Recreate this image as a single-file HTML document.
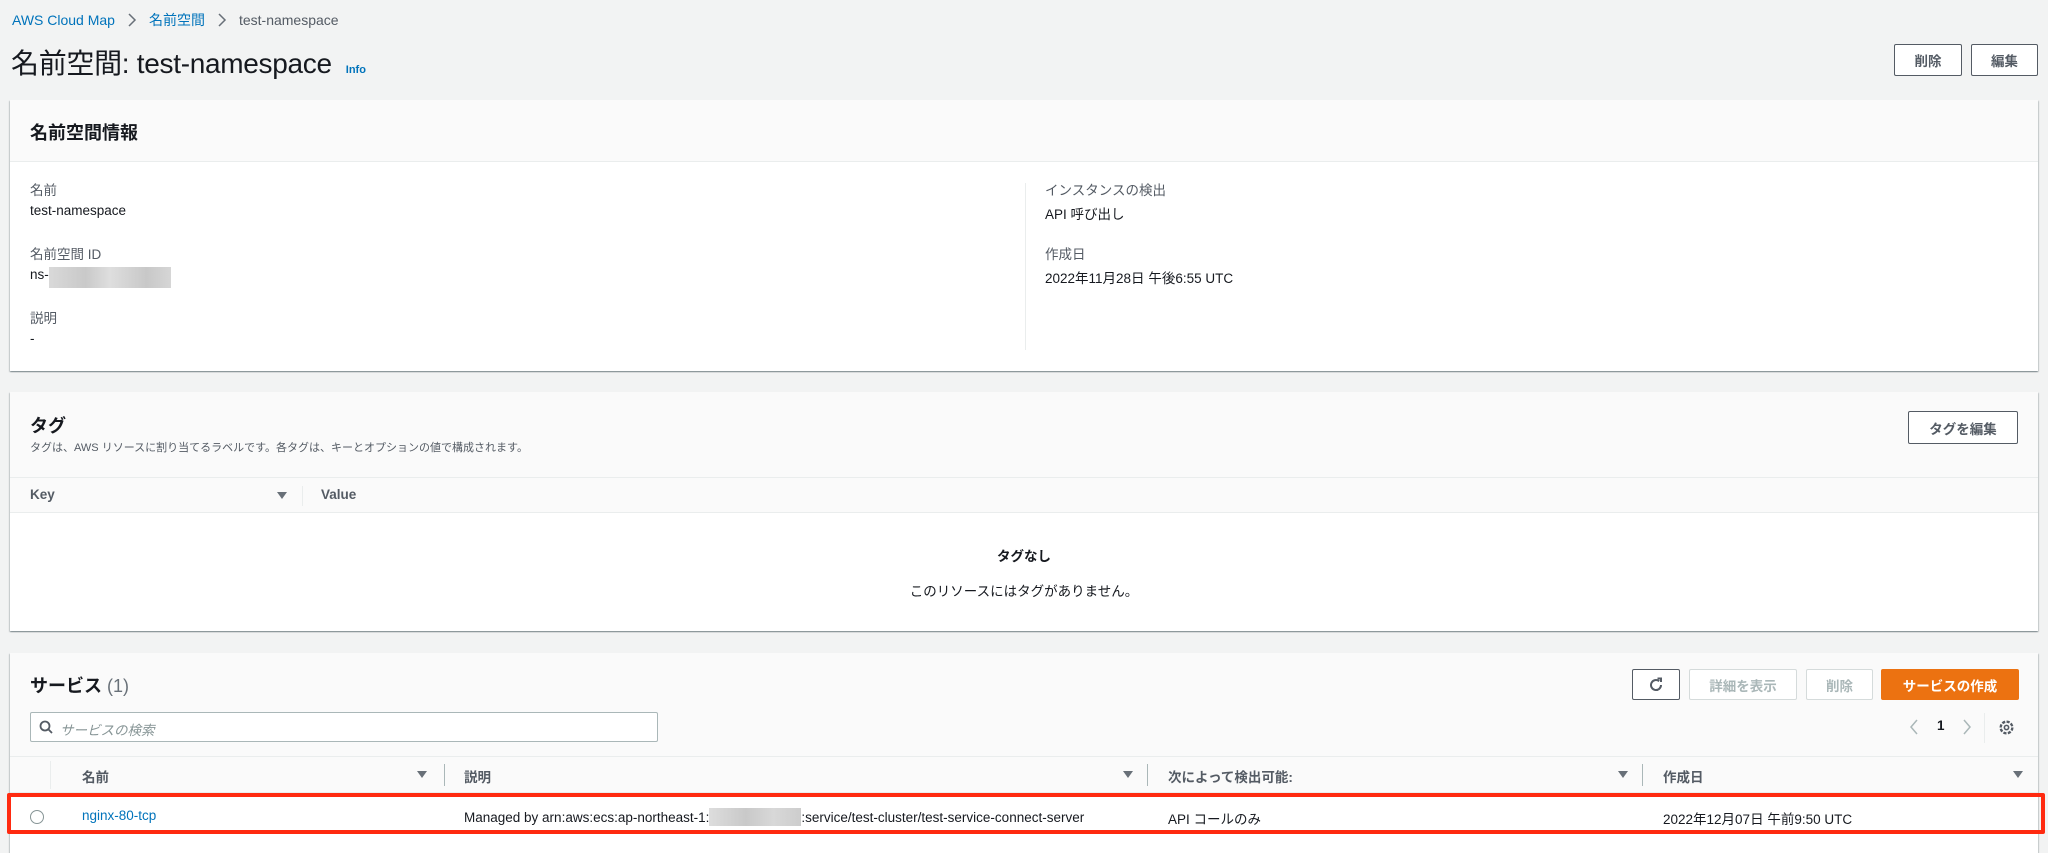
<!DOCTYPE html>
<html><head><meta charset="utf-8"><style>
*{box-sizing:border-box;margin:0;padding:0}
body{width:2048px;height:843px;background:#f2f3f3;font-family:"Liberation Sans","Noto Sans CJK JP",sans-serif;color:#16191f;position:relative;overflow:hidden;font-size:13.5px}
.a{position:absolute;white-space:nowrap}
.card{position:absolute;left:10px;width:2028px;background:#fff;box-shadow:0 1px 1px 0 rgba(0,28,36,.3),1px 1px 1px 0 rgba(0,28,36,.15),-1px 1px 1px 0 rgba(0,28,36,.15)}
.hd{background:#fafafa;border-bottom:1px solid #eaeded}
.lbl{color:#545b64}
.btn{position:absolute;border:1px solid #545b64;border-radius:2px;background:#fff;font-weight:bold;font-size:13.5px;color:#545b64;display:flex;align-items:center;justify-content:center}
.dis{border-color:#d5dbdb;color:#aab7b8}
.th{font-weight:bold;color:#545b64}
.tri{position:absolute;width:0;height:0;border-left:5px solid transparent;border-right:5px solid transparent;border-top:7px solid #687078}
.vd{position:absolute;width:1px;background:#aab7b8}
.blur{position:absolute;background:linear-gradient(90deg,#d9d9d9,#c9c9c9 30%,#dedede 50%,#c8c8c8 80%,#d6d6d6)}
.bc{position:absolute;left:12px;top:10px;font-size:14px;display:flex;align-items:center;gap:12px;white-space:nowrap}
</style></head><body>
<div class="bc"><span style="color:#0073bb">AWS Cloud Map</span>
<svg width="10" height="16" viewBox="0 0 10 16"><path d="M2 2l6 6-6 6" fill="none" stroke="#687078" stroke-width="1.5"/></svg>
<span style="color:#0073bb">名前空間</span>
<svg width="10" height="16" viewBox="0 0 10 16"><path d="M2 2l6 6-6 6" fill="none" stroke="#687078" stroke-width="1.5"/></svg>
<span style="color:#545b64">test-namespace</span></div>
<div class="a" style="left:11px;top:42px;font-size:28px;letter-spacing:-0.3px">名前空間: test-namespace<span style="font-size:11px;font-weight:bold;color:#0073bb;margin-left:14px;letter-spacing:0">Info</span></div>
<div class="btn" style="left:1894px;top:44px;width:68px;height:32px">削除</div>
<div class="btn" style="left:1971px;top:44px;width:67px;height:32px">編集</div>

<div class="card" style="top:100px;height:271px">
 <div class="hd" style="height:62px"></div>
 <div class="a" style="left:20px;top:19px;font-size:18px;font-weight:bold">名前空間情報</div>
 <div class="a lbl" style="left:20px;top:79px">名前</div>
 <div class="a" style="left:20px;top:103px">test-namespace</div>
 <div class="a lbl" style="left:20px;top:143px">名前空間 ID</div>
 <div class="a" style="left:20px;top:167px">ns-</div>
 <div class="blur" style="left:39px;top:167px;width:122px;height:21px"></div>
 <div class="a lbl" style="left:20px;top:207px">説明</div>
 <div class="a" style="left:20px;top:231px">-</div>
 <div class="vd" style="left:1015px;top:83px;height:167px;background:#eaeded"></div>
 <div class="a lbl" style="left:1035px;top:79px">インスタンスの検出</div>
 <div class="a" style="left:1035px;top:103px">API 呼び出し</div>
 <div class="a lbl" style="left:1035px;top:143px">作成日</div>
 <div class="a" style="left:1035px;top:167px">2022年11月28日 午後6:55 UTC</div>
</div>

<div class="card" style="top:392px;height:239px">
 <div class="hd" style="height:86px;border-bottom:1px solid #eaeded"></div>
 <div class="a" style="left:20px;top:20px;font-size:18px;font-weight:bold">タグ</div>
 <div class="a lbl" style="left:20px;top:47px;font-size:11px">タグは、AWS リソースに割り当てるラベルです。各タグは、キーとオプションの値で構成されます。</div>
 <div class="btn" style="left:1898px;top:19px;width:110px;height:33px">タグを編集</div>
 <div style="position:absolute;left:0;top:86px;width:100%;height:35px;background:#fafafa;border-bottom:1px solid #eaeded"></div>
 <div class="a th" style="left:20px;top:95px">Key</div>
 <div class="tri" style="left:267px;top:100px"></div>
 <div class="vd" style="left:292px;top:94px;height:20px;background:#eaeded"></div>
 <div class="a th" style="left:311px;top:95px">Value</div>
 <div class="a" style="left:0;width:100%;text-align:center;top:153px;font-weight:bold">タグなし</div>
 <div class="a" style="left:0;width:100%;text-align:center;top:188px">このリソースにはタグがありません。</div>
</div>

<div class="card" style="top:653px;height:200px">
 <div class="hd" style="height:104px;border-bottom:1px solid #eaeded"></div>
 <div class="a" style="left:20px;top:19px;font-size:18px;font-weight:bold">サービス <span style="font-weight:normal;color:#687078">(1)</span></div>
 <div class="btn" style="left:1622px;top:16px;width:48px;height:31px;color:#545b64">
  <svg width="16" height="16" viewBox="0 0 16 16"><path d="M13 8a5 5 0 1 1-1.8-3.8" fill="none" stroke="#545b64" stroke-width="2"/><path d="M9.5 1.5h3.5v3.5" fill="none" stroke="#545b64" stroke-width="2"/></svg></div>
 <div class="btn dis" style="left:1679px;top:16px;width:108px;height:31px">詳細を表示</div>
 <div class="btn dis" style="left:1796px;top:16px;width:67px;height:31px">削除</div>
 <div class="btn" style="left:1871px;top:16px;width:138px;height:31px;background:#ec7211;border-color:#ec7211;color:#fff">サービスの作成</div>
 <div style="position:absolute;left:20px;top:59px;width:628px;height:30px;border:1px solid #aab7b8;border-radius:2px;background:#fff"></div>
 <svg class="a" style="left:29px;top:67px" width="14" height="14" viewBox="0 0 14 14"><circle cx="6" cy="6" r="4.5" fill="none" stroke="#545b64" stroke-width="1.8"/><path d="M9.3 9.3 13 13" stroke="#545b64" stroke-width="1.8"/></svg>
 <div class="a" style="left:50px;top:66px;color:#879596;font-style:italic">サービスの検索</div>
 <svg class="a" style="left:1899px;top:65px" width="10" height="18" viewBox="0 0 10 18"><path d="M8 2 2 9l6 7" fill="none" stroke="#aab7b8" stroke-width="1.5"/></svg>
 <div class="a" style="left:1927px;top:65px;font-weight:bold">1</div>
 <svg class="a" style="left:1952px;top:65px" width="10" height="18" viewBox="0 0 10 18"><path d="M2 2l6 7-6 7" fill="none" stroke="#aab7b8" stroke-width="1.5"/></svg>
 <div class="vd" style="left:1974px;top:60px;height:30px;background:#eaeded"></div>
 <svg class="a" style="left:1988px;top:66px" width="17" height="17" viewBox="0 0 16 16"><circle cx="8" cy="8" r="5.5" fill="none" stroke="#545b64" stroke-width="2.2" stroke-dasharray="3 1.3"/><circle cx="8" cy="8" r="2" fill="none" stroke="#545b64" stroke-width="1.5"/></svg>
 <div style="position:absolute;left:0;top:104px;width:100%;height:36px;background:#fafafa;border-bottom:1px solid #eaeded"></div>
 <div class="vd" style="left:40px;top:108px;height:28px;background:#eaeded"></div>
 <div class="a th" style="left:72px;top:113px">名前</div>
 <div class="tri" style="left:407px;top:118px"></div>
 <div class="vd" style="left:434px;top:111px;height:22px"></div>
 <div class="a th" style="left:454px;top:113px">説明</div>
 <div class="tri" style="left:1113px;top:118px"></div>
 <div class="vd" style="left:1137px;top:111px;height:22px"></div>
 <div class="a th" style="left:1158px;top:113px">次によって検出可能:</div>
 <div class="tri" style="left:1608px;top:118px"></div>
 <div class="vd" style="left:1632px;top:111px;height:22px"></div>
 <div class="a th" style="left:1653px;top:113px">作成日</div>
 <div class="tri" style="left:2003px;top:118px"></div>
 <div style="position:absolute;left:20px;top:157px;width:14px;height:14px;border:1.5px solid #879596;border-radius:50%"></div>
 <div class="a" style="left:72px;top:155px;color:#0073bb">nginx-80-tcp</div>
 <div class="a" style="left:454px;top:155px">Managed by arn:aws:ecs:ap-northeast-1:<span style="display:inline-block;width:92px;height:18px;vertical-align:-4px;background:linear-gradient(90deg,#ddd,#c9c9c9 40%,#d8d8d8 70%,#cdcdcd)"></span>:service/test-cluster/test-service-connect-server</div>
 <div class="a" style="left:1158px;top:155px">API コールのみ</div>
 <div class="a" style="left:1653px;top:155px">2022年12月07日 午前9:50 UTC</div>
</div>
<div style="position:absolute;left:7px;top:793px;width:2038px;height:41px;border:4px solid #ff2a10;border-radius:2px"></div>
</body></html>
